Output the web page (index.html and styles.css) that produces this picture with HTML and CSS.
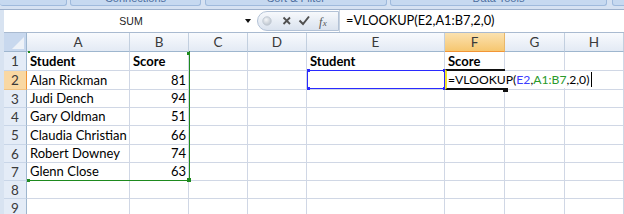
FILE: index.html
```html
<!DOCTYPE html>
<html>
<head>
<meta charset="utf-8">
<link rel="stylesheet" href="styles.css">
</head>
<body>
<div class="app">
  <div class="ribbon">
    <div class="tabs">
      <div class="tab t1"></div>
      <div class="tab t2"><span>Connections</span></div>
      <div class="tab t3"><span>Sort &amp; Filter</span></div>
      <div class="tab t4"><span>Data Tools</span></div>
      <div class="tab t5"></div>
    </div>
  </div>
  <div class="fbar">
    <div class="namebox"><span class="name">SUM</span><span class="arrow"></span></div>
    <svg class="pill" width="82" height="20" viewBox="0 0 82 20">
      <defs>
        <linearGradient id="pg" x1="0" y1="0" x2="0" y2="1">
          <stop offset="0" stop-color="#f7f9fc"/>
          <stop offset="1" stop-color="#d9e2ee"/>
        </linearGradient>
        <radialGradient id="cg" cx="0.4" cy="0.35" r="0.7">
          <stop offset="0" stop-color="#f4f6f8"/>
          <stop offset="1" stop-color="#b9c2cc"/>
        </radialGradient>
      </defs>
      <path d="M10 0.5 H81.5 V19.5 H10 A9.5 9.5 0 0 1 10 0.5 Z" fill="url(#pg)" stroke="#b3c2d6"/>
      <circle cx="10" cy="10" r="4.2" fill="url(#cg)" stroke="#c2cad4"/>
      <path d="M26.5 6.5 L33 13 M33 6.5 L26.5 13" stroke="#505050" stroke-width="1.8" fill="none"/>
      <path d="M42.5 9.5 L46 13 L52 5.5" stroke="#505050" stroke-width="2" fill="none"/>
      <text x="62" y="14.5" class="fx">f<tspan font-size="9" dx="0.5">x</tspan></text>
    </svg>
    <div class="formula">=VLOOKUP(E2,A1:B7,2,0)</div>
  </div>
  <div class="sheet">
    <div class="corner"><svg width="22" height="18" viewBox="0 0 22 18"><path d="M20 4 L20 16 L8 16 Z" fill="#eef2f8"/></svg></div>
    <div class="ch">A</div><div class="ch">B</div><div class="ch">C</div><div class="ch">D</div><div class="ch">E</div><div class="ch sel">F</div><div class="ch">G</div><div class="ch">H</div>

    <div class="rh">1</div><div class="c b">Student</div><div class="c b">Score</div><div class="c"></div><div class="c"></div><div class="c b">Student</div><div class="c b">Score</div><div class="c"></div><div class="c"></div>
    <div class="rh sel">2</div><div class="c">Alan Rickman</div><div class="c n">81</div><div class="c"></div><div class="c"></div><div class="c"></div><div class="c"></div><div class="c"></div><div class="c"></div>
    <div class="rh">3</div><div class="c">Judi Dench</div><div class="c n">94</div><div class="c"></div><div class="c"></div><div class="c"></div><div class="c"></div><div class="c"></div><div class="c"></div>
    <div class="rh">4</div><div class="c">Gary Oldman</div><div class="c n">51</div><div class="c"></div><div class="c"></div><div class="c"></div><div class="c"></div><div class="c"></div><div class="c"></div>
    <div class="rh">5</div><div class="c">Claudia Christian</div><div class="c n">66</div><div class="c"></div><div class="c"></div><div class="c"></div><div class="c"></div><div class="c"></div><div class="c"></div>
    <div class="rh">6</div><div class="c">Robert Downey</div><div class="c n">74</div><div class="c"></div><div class="c"></div><div class="c"></div><div class="c"></div><div class="c"></div><div class="c"></div>
    <div class="rh">7</div><div class="c">Glenn Close</div><div class="c n">63</div><div class="c"></div><div class="c"></div><div class="c"></div><div class="c"></div><div class="c"></div><div class="c"></div>
    <div class="rh">8</div><div class="c"></div><div class="c"></div><div class="c"></div><div class="c"></div><div class="c"></div><div class="c"></div><div class="c"></div><div class="c"></div>
    <div class="rh">9</div><div class="c"></div><div class="c"></div><div class="c"></div><div class="c"></div><div class="c"></div><div class="c"></div><div class="c"></div><div class="c"></div>

    <div class="rng-green"></div>
    <div class="hd g g1"></div><div class="hd g g2"></div><div class="hd g g3"></div><div class="hd g g4"></div>
    <div class="rng-blue"></div>
    <div class="hd bl b1"></div><div class="hd bl b2"></div><div class="hd bl b3"></div><div class="hd bl b4"></div>
    <div class="active"></div>
    <div class="editor">=VLOOKUP(<span class="refb">E2</span>,<span class="refg">A1:B7</span>,2,0)<span class="caret"></span></div>
    <div class="fillh"></div>
  </div>
</div>
</body>
</html>
```

FILE: styles.css
```css
* { box-sizing: border-box; }
html, body { margin: 0; padding: 0; }
body {
  width: 624px;
  height: 214px;
  overflow: hidden;
  background: #d8e3f1;
  font-family: Lato, "Liberation Sans", sans-serif;
}
.app { width: 624px; }

.ribbon {
  height: 10px;
  background: #d6e2f2;
  border-bottom: 1px solid #9db1cc;
  overflow: hidden;
}
.tabs { display: flex; height: 6px; }
.tab {
  height: 6px;
  background: #c6d9f0;
  border: 1px solid #9fbadc;
  border-top: none;
  border-radius: 0 0 3px 3px;
  overflow: hidden;
  text-align: center;
  flex: none;
}
.tab span {
  display: block;
  font: 11px/11px "Liberation Sans", sans-serif;
  color: #4e6f9f;
  margin-top: -7px;
}
.t1 { width: 67px; border-left: none; }
.t2 { width: 131px; margin-left: 3px; }
.t3 { width: 182px; margin-left: 4px; }
.t4 { width: 217px; margin-left: 3px; }
.t5 { width: 20px; margin-left: 5px; }

.fbar {
  display: flex;
  align-items: center;
  height: 23px;
  margin-left: 4px;
  background: #fff;
  border-bottom: 1px solid #a9bad0;
}
.namebox {
  width: 250px;
  height: 22px;
  position: relative;
  display: flex;
  align-items: center;
  justify-content: center;
  flex: none;
}
.name {
  font: 10.5px "Liberation Sans", sans-serif;
  color: #222;
  margin-left: 4px;
}
.arrow {
  position: absolute;
  right: 3px;
  top: 9px;
  width: 0;
  height: 0;
  border-left: 3.5px solid transparent;
  border-right: 3.5px solid transparent;
  border-top: 4px solid #111;
}
.pill { flex: none; margin-left: 3px; display: block; }
.fx { font: italic 12px "Liberation Serif", serif; fill: #555; }
.formula {
  flex: 1;
  height: 22px;
  border-left: 1px solid #c8d3e0;
  padding-left: 6px;
  font-size: 12.8px;
  line-height: 21px;
  color: #000;
  white-space: nowrap;
}

.sheet {
  position: relative;
  margin-left: 4px;
  display: grid;
  grid-template-columns: 23px 103px 59px 59px 59px 138px 60px 60px 59px;
  grid-template-rows: 19px 19px 19px 18px 18px 19px 18px 18px 18px 18px;
  background: #fff;
}
.corner {
  background: #c8d8ee;
  border-right: 1px solid #9eb6ce;
  border-bottom: 1px solid #9eb6ce;
}
.corner svg { display: block; }
.ch {
  background: linear-gradient(#f8fafd, #e3eaf4);
  border-right: 1px solid #c2cfdf;
  border-bottom: 1px solid #9eb6ce;
  display: flex;
  align-items: center;
  justify-content: center;
  font-size: 13.5px;
  color: #3a3a3a;
}
.ch.sel {
  background: linear-gradient(#fbe2b0, #f6c770);
  border-bottom: 1px solid #f29536;
  border-right-color: #e8b76a;
}
.rh {
  background: #e4ecf7;
  border-right: 1px solid #9eb6ce;
  border-bottom: 1px solid #c9d6e8;
  display: flex;
  align-items: center;
  justify-content: center;
  font-size: 13.5px;
  color: #3a3a3a;
}
.rh.sel {
  background: #f9d8a3;
  border-right-color: #f29536;
  border-bottom-color: #f0c384;
}
.c {
  border-right: 1px solid #d0d7e5;
  border-bottom: 1px solid #d0d7e5;
  display: flex;
  align-items: flex-end;
  padding: 0 2px 1px 3px;
  font-size: 13px;
  line-height: 16px;
  color: #000;
  white-space: nowrap;
  overflow: hidden;
}
.c.b { font-weight: bold; }
.c.n { justify-content: flex-end; }

.rng-green {
  position: absolute;
  left: 23px;
  top: 18px;
  width: 163px;
  height: 130px;
  border-right: 1px solid #1e8a1e;
  border-bottom: 1px solid #1e8a1e;
}
.hd { position: absolute; width: 3px; height: 3px; }
.g { background: #1e8a1e; }
.g1 { left: 24px; top: 18px; width: 2px; height: 2px; }
.g2 { left: 183px; top: 19px; }
.g3 { left: 23px; top: 146px; }
.g4 { left: 183px; top: 145px; width: 4px; height: 4px; }

.rng-blue {
  position: absolute;
  left: 303px;
  top: 37px;
  width: 138px;
  height: 19px;
  border: 1px solid #2a2aff;
}
.bl { background: #2a2aff; }
.b1 { left: 303px; top: 36px; }
.b2 { left: 439px; top: 36px; }
.b3 { left: 303px; top: 54px; }
.b4 { left: 439px; top: 54px; }

.active {
  position: absolute;
  left: 441px;
  top: 36px;
  width: 60px;
  height: 21px;
  border-top: 2px solid #111;
  border-bottom: 2px solid #111;
  border-left: 2px solid #f4e62a;
}
.editor {
  position: absolute;
  left: 443px;
  top: 38px;
  width: 143px;
  height: 17px;
  background: #fff;
  padding: 1px 0 0 1px;
  font-size: 12.2px;
  line-height: 16px;
  color: #000;
  white-space: nowrap;
}
.refb { color: #3d3dff; }
.refg { color: #2a9a2a; }
.caret {
  display: inline-block;
  width: 1px;
  height: 15px;
  background: #000;
  margin-left: 2px;
  vertical-align: -3px;
}
.fillh {
  position: absolute;
  left: 499px;
  top: 55px;
  width: 5px;
  height: 4px;
  background: #111;
}
```
